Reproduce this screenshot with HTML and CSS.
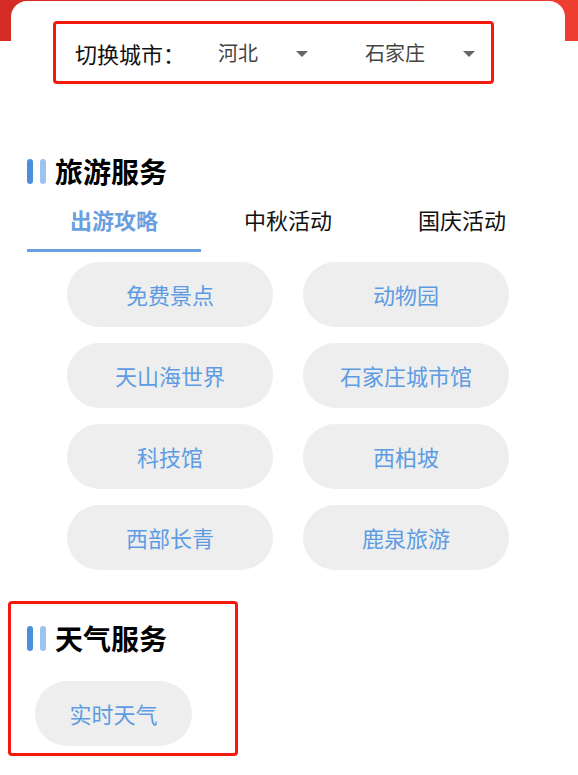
FILE: index.html
```html
<!DOCTYPE html>
<html lang="zh-CN">
<head>
  <meta charset="UTF-8">
  <meta name="viewport" content="width=device-width, initial-scale=1.0">
  <title>城市服务</title>
  <link rel="stylesheet" href="styles.css">
</head>
<body>
  <div class="page">
    <div class="card">
      <!-- city switcher -->
      <div class="city-box">
        <span class="city-label">切换城市：</span>
        <div class="select select-province">
          <span>河北</span>
          <i class="caret"></i>
        </div>
        <div class="select select-city">
          <span>石家庄</span>
          <i class="caret"></i>
        </div>
      </div>

      <h2 class="section-title"><span class="bars"><i></i><i></i></span>旅游服务</h2>
      <div class="tabs">
        <div class="tab active">出游攻略</div>
        <div class="tab">中秋活动</div>
        <div class="tab">国庆活动</div>
      </div>
      <div class="btn-grid">
        <a class="pill">免费景点</a>
        <a class="pill">动物园</a>
        <a class="pill">天山海世界</a>
        <a class="pill">石家庄城市馆</a>
        <a class="pill">科技馆</a>
        <a class="pill">西柏坡</a>
        <a class="pill">西部长青</a>
        <a class="pill">鹿泉旅游</a>
      </div>

      <!-- weather -->
      <div class="weather-box">
        <h2 class="section-title"><span class="bars"><i></i><i></i></span>天气服务</h2>
        <a class="pill pill-small">实时天气</a>
      </div>
    </div>
  </div>
</body>
</html>
```

FILE: styles.css
```css
/* page */
body {
  margin: 0;
  background: #fff;
  font-family: "Noto Sans CJK SC", "Noto Sans", sans-serif;
  color: #111;
}
.page {
  width: 578px;
  height: 775px;
  overflow: hidden;
  background: linear-gradient(90deg, #d42c25 0%, #dc3128 60%, #ee3f30 100%) no-repeat;
  background-size: 100% 41px;
}
.card {
  margin: 1px 13px 0 11px;
  padding: 20px 16px 0 16px;
  background: #fff;
  border-radius: 16px 16px 0 0;
  min-height: 774px;
  box-sizing: border-box;
}

/* city switcher */
.city-box {
  display: flex;
  align-items: center;
  width: 441px;
  height: 63px;
  margin-left: 26px;
  padding-left: 19px;
  border: 3px solid #f5180c;
  border-radius: 4px;
  box-sizing: border-box;
  white-space: nowrap;
}
.city-label {
  flex: none;
  font-size: 22px;
  color: #111;
}
.select {
  display: flex;
  align-items: center;
  flex: none;
  font-size: 20px;
  color: #444;
}
.select-province {
  margin-left: 33px;
}
.select-province span {
  width: 78px;
}
.select-city {
  margin-left: 57px;
}
.select-city span {
  width: 98px;
}
.caret {
  width: 0;
  height: 0;
  border-left: 6px solid transparent;
  border-right: 6px solid transparent;
  border-top: 6px solid #666;
  margin-top: 2px;
}

/* section titles */
.section-title {
  display: flex;
  align-items: center;
  margin: 69px 0 0 0;
  font-size: 28px;
  line-height: 36px;
  font-weight: bold;
  color: #000;
}
.bars {
  display: flex;
  gap: 7px;
  margin-right: 9px;
}
.bars i {
  width: 6px;
  height: 25px;
  border-radius: 3px;
  background: #4d8fdd;
}
.bars i + i {
  background: #9dc3ef;
}

/* tabs */
.tabs {
  display: flex;
}
.tab {
  flex: 1;
  height: 60px;
  line-height: 60px;
  text-align: center;
  font-size: 22px;
  color: #111;
  border-bottom: 3px solid transparent;
}
.tab.active {
  color: #6a9fdf;
  font-weight: bold;
  border-bottom-color: #6a9fdf;
}

/* buttons */
.btn-grid {
  display: grid;
  grid-template-columns: 206px 206px;
  justify-content: center;
  column-gap: 30px;
  row-gap: 16px;
  margin-top: 10px;
}
.pill {
  display: block;
  height: 65px;
  line-height: 65px;
  border-radius: 33px;
  background: #eee;
  color: #5d9ce3;
  font-size: 22px;
  text-align: center;
  cursor: pointer;
}

/* weather */
.weather-box {
  width: 230px;
  height: 155px;
  margin: 31px 0 0 -19px;
  padding: 16px 0 0 16px;
  border: 3px solid #f5180c;
  border-radius: 4px;
  box-sizing: border-box;
}
.weather-box .section-title {
  margin-top: 0;
}
.pill-small {
  width: 157px;
  margin: 25px 0 0 8px;
}
```
